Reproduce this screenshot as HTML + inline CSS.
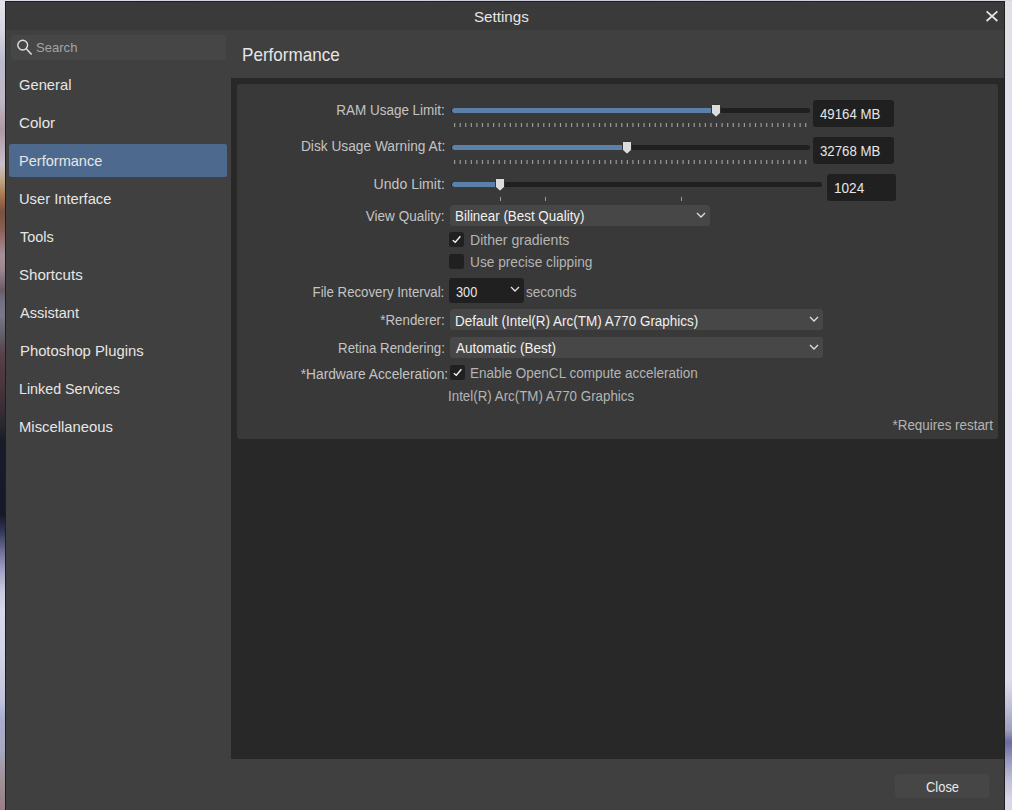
<!DOCTYPE html>
<html><head><meta charset="utf-8"><title>Settings</title>
<style>
html,body{margin:0;padding:0;width:1012px;height:810px;overflow:hidden;background:#404040;}
body{position:relative;font-family:"Liberation Sans", sans-serif;}
body>div,body>svg{position:absolute;}
.t{white-space:nowrap;}
</style></head><body>
<div style="left:0px;top:0px;width:6px;height:810px;background:linear-gradient(to bottom,#e4e4ec 0px,#d6d6e0 30px,#bcbcd0 60px,#c0b8c4 100px,#ad9aa2 130px,#c8c0cc 165px,#c0a888 180px,#a87850 195px,#7a5040 212px,#8a6058 230px,#a89098 255px,#9a8890 270px,#6a5a68 290px,#707080 300px,#787888 315px,#606068 335px,#584048 355px,#403038 400px,#282830 425px,#181c28 440px,#161a28 515px,#303450 530px,#6a6c90 550px,#a0a0c4 570px,#c8c8e0 590px,#d8d8ec 610px,#d4d4e8 650px,#c0c4dc 700px,#a8acd0 720px,#a8a8c0 750px,#a09098 780px,#987e88 810px);border-radius:0px;"></div>
<div style="left:1004px;top:0px;width:8px;height:810px;background:linear-gradient(to bottom,#e0e0e4 0px,#e0e0ec 100px,#dedeea 680px,#c8c8dc 700px,#a0a0c0 730px,#6a6aa0 742px,#9898c0 760px,#c0c0d8 780px,#d8d8e8 800px);border-radius:0px;"></div>
<div style="left:0px;top:0px;width:1012px;height:1px;background:linear-gradient(to right,#dcdce6,#d0d0de 40%,#c8c8d8 60%,#d8d8e0);border-radius:0px;"></div>
<div style="left:5px;top:1px;width:1000px;height:809px;background:#1f1f1f;border-radius:0px;"></div>
<div style="left:6px;top:2px;width:998px;height:28px;background:#3a3a3a;border-radius:0px;"></div>
<div style="left:6px;top:30px;width:998px;height:780px;background:#404040;border-radius:0px;"></div>
<div style="left:11px;top:35px;width:215px;height:25px;background:#464646;border-radius:3px;"></div>
<div style="left:9px;top:144px;width:218px;height:33px;background:#4d6a8e;border-radius:2.5px;"></div>
<div style="left:231px;top:78px;width:773px;height:681px;background:#282828;border-radius:0px;"></div>
<div style="left:237px;top:84px;width:761px;height:355px;background:#393939;border-radius:3px;"></div>
<div style="left:895px;top:774px;width:94px;height:24px;background:#464646;border-radius:3px;"></div>
<div style="left:451px;top:107.9px;width:359px;height:5.599999999999994px;background:#202020;border-radius:3px;"></div>
<div style="left:451.5px;top:107.9px;width:264.5px;height:5.199999999999989px;background:#5b80aa;border-radius:2.6px;"></div>
<div style="left:451px;top:144.9px;width:359px;height:5.599999999999994px;background:#202020;border-radius:3px;"></div>
<div style="left:451.5px;top:144.9px;width:175.5px;height:5.199999999999989px;background:#5b80aa;border-radius:2.6px;"></div>
<div style="left:451px;top:181.9px;width:371px;height:5.599999999999994px;background:#202020;border-radius:3px;"></div>
<div style="left:451.5px;top:181.9px;width:48.5px;height:5.199999999999989px;background:#5b80aa;border-radius:2.6px;"></div>
<svg style="left:711px;top:103.5px;width:10px;height:14px" viewBox="0 0 10 14"><path d="M0.5 1.5 Q0.5 0.5 1.5 0.5 L8.5 0.5 Q9.5 0.5 9.5 1.5 L9.5 9 L5 13.3 L0.5 9 Z" fill="#dcdcdc" stroke="#1a1a1a" stroke-width="0.8"/></svg>
<svg style="left:622px;top:140.5px;width:10px;height:14px" viewBox="0 0 10 14"><path d="M0.5 1.5 Q0.5 0.5 1.5 0.5 L8.5 0.5 Q9.5 0.5 9.5 1.5 L9.5 9 L5 13.3 L0.5 9 Z" fill="#dcdcdc" stroke="#1a1a1a" stroke-width="0.8"/></svg>
<svg style="left:495px;top:178px;width:10px;height:14px" viewBox="0 0 10 14"><path d="M0.5 1.5 Q0.5 0.5 1.5 0.5 L8.5 0.5 Q9.5 0.5 9.5 1.5 L9.5 9 L5 13.3 L0.5 9 Z" fill="#dcdcdc" stroke="#1a1a1a" stroke-width="0.8"/></svg>
<svg style="left:453.9px;top:123px;width:353.1px;height:4px" viewBox="0 0 353.1 4"><rect x="0.00" y="0" width="1.2" height="4" fill="#9a9a9a"/><rect x="5.57" y="0" width="1.2" height="4" fill="#9a9a9a"/><rect x="11.15" y="0" width="1.2" height="4" fill="#9a9a9a"/><rect x="16.72" y="0" width="1.2" height="4" fill="#9a9a9a"/><rect x="22.29" y="0" width="1.2" height="4" fill="#9a9a9a"/><rect x="27.87" y="0" width="1.2" height="4" fill="#9a9a9a"/><rect x="33.44" y="0" width="1.2" height="4" fill="#9a9a9a"/><rect x="39.01" y="0" width="1.2" height="4" fill="#9a9a9a"/><rect x="44.58" y="0" width="1.2" height="4" fill="#9a9a9a"/><rect x="50.16" y="0" width="1.2" height="4" fill="#9a9a9a"/><rect x="55.73" y="0" width="1.2" height="4" fill="#9a9a9a"/><rect x="61.30" y="0" width="1.2" height="4" fill="#9a9a9a"/><rect x="66.88" y="0" width="1.2" height="4" fill="#9a9a9a"/><rect x="72.45" y="0" width="1.2" height="4" fill="#9a9a9a"/><rect x="78.02" y="0" width="1.2" height="4" fill="#9a9a9a"/><rect x="83.60" y="0" width="1.2" height="4" fill="#9a9a9a"/><rect x="89.17" y="0" width="1.2" height="4" fill="#9a9a9a"/><rect x="94.74" y="0" width="1.2" height="4" fill="#9a9a9a"/><rect x="100.31" y="0" width="1.2" height="4" fill="#9a9a9a"/><rect x="105.89" y="0" width="1.2" height="4" fill="#9a9a9a"/><rect x="111.46" y="0" width="1.2" height="4" fill="#9a9a9a"/><rect x="117.03" y="0" width="1.2" height="4" fill="#9a9a9a"/><rect x="122.61" y="0" width="1.2" height="4" fill="#9a9a9a"/><rect x="128.18" y="0" width="1.2" height="4" fill="#9a9a9a"/><rect x="133.75" y="0" width="1.2" height="4" fill="#9a9a9a"/><rect x="139.33" y="0" width="1.2" height="4" fill="#9a9a9a"/><rect x="144.90" y="0" width="1.2" height="4" fill="#9a9a9a"/><rect x="150.47" y="0" width="1.2" height="4" fill="#9a9a9a"/><rect x="156.04" y="0" width="1.2" height="4" fill="#9a9a9a"/><rect x="161.62" y="0" width="1.2" height="4" fill="#9a9a9a"/><rect x="167.19" y="0" width="1.2" height="4" fill="#9a9a9a"/><rect x="172.76" y="0" width="1.2" height="4" fill="#9a9a9a"/><rect x="178.34" y="0" width="1.2" height="4" fill="#9a9a9a"/><rect x="183.91" y="0" width="1.2" height="4" fill="#9a9a9a"/><rect x="189.48" y="0" width="1.2" height="4" fill="#9a9a9a"/><rect x="195.05" y="0" width="1.2" height="4" fill="#9a9a9a"/><rect x="200.63" y="0" width="1.2" height="4" fill="#9a9a9a"/><rect x="206.20" y="0" width="1.2" height="4" fill="#9a9a9a"/><rect x="211.77" y="0" width="1.2" height="4" fill="#9a9a9a"/><rect x="217.35" y="0" width="1.2" height="4" fill="#9a9a9a"/><rect x="222.92" y="0" width="1.2" height="4" fill="#9a9a9a"/><rect x="228.49" y="0" width="1.2" height="4" fill="#9a9a9a"/><rect x="234.07" y="0" width="1.2" height="4" fill="#9a9a9a"/><rect x="239.64" y="0" width="1.2" height="4" fill="#9a9a9a"/><rect x="245.21" y="0" width="1.2" height="4" fill="#9a9a9a"/><rect x="250.78" y="0" width="1.2" height="4" fill="#9a9a9a"/><rect x="256.36" y="0" width="1.2" height="4" fill="#9a9a9a"/><rect x="261.93" y="0" width="1.2" height="4" fill="#9a9a9a"/><rect x="267.50" y="0" width="1.2" height="4" fill="#9a9a9a"/><rect x="273.08" y="0" width="1.2" height="4" fill="#9a9a9a"/><rect x="278.65" y="0" width="1.2" height="4" fill="#9a9a9a"/><rect x="284.22" y="0" width="1.2" height="4" fill="#9a9a9a"/><rect x="289.80" y="0" width="1.2" height="4" fill="#9a9a9a"/><rect x="295.37" y="0" width="1.2" height="4" fill="#9a9a9a"/><rect x="300.94" y="0" width="1.2" height="4" fill="#9a9a9a"/><rect x="306.51" y="0" width="1.2" height="4" fill="#9a9a9a"/><rect x="312.09" y="0" width="1.2" height="4" fill="#9a9a9a"/><rect x="317.66" y="0" width="1.2" height="4" fill="#9a9a9a"/><rect x="323.23" y="0" width="1.2" height="4" fill="#9a9a9a"/><rect x="328.81" y="0" width="1.2" height="4" fill="#9a9a9a"/><rect x="334.38" y="0" width="1.2" height="4" fill="#9a9a9a"/><rect x="339.95" y="0" width="1.2" height="4" fill="#9a9a9a"/><rect x="345.53" y="0" width="1.2" height="4" fill="#9a9a9a"/><rect x="351.10" y="0" width="1.2" height="4" fill="#9a9a9a"/></svg>
<svg style="left:453.9px;top:160px;width:353.1px;height:4px" viewBox="0 0 353.1 4"><rect x="0.00" y="0" width="1.2" height="4" fill="#9a9a9a"/><rect x="5.57" y="0" width="1.2" height="4" fill="#9a9a9a"/><rect x="11.15" y="0" width="1.2" height="4" fill="#9a9a9a"/><rect x="16.72" y="0" width="1.2" height="4" fill="#9a9a9a"/><rect x="22.29" y="0" width="1.2" height="4" fill="#9a9a9a"/><rect x="27.87" y="0" width="1.2" height="4" fill="#9a9a9a"/><rect x="33.44" y="0" width="1.2" height="4" fill="#9a9a9a"/><rect x="39.01" y="0" width="1.2" height="4" fill="#9a9a9a"/><rect x="44.58" y="0" width="1.2" height="4" fill="#9a9a9a"/><rect x="50.16" y="0" width="1.2" height="4" fill="#9a9a9a"/><rect x="55.73" y="0" width="1.2" height="4" fill="#9a9a9a"/><rect x="61.30" y="0" width="1.2" height="4" fill="#9a9a9a"/><rect x="66.88" y="0" width="1.2" height="4" fill="#9a9a9a"/><rect x="72.45" y="0" width="1.2" height="4" fill="#9a9a9a"/><rect x="78.02" y="0" width="1.2" height="4" fill="#9a9a9a"/><rect x="83.60" y="0" width="1.2" height="4" fill="#9a9a9a"/><rect x="89.17" y="0" width="1.2" height="4" fill="#9a9a9a"/><rect x="94.74" y="0" width="1.2" height="4" fill="#9a9a9a"/><rect x="100.31" y="0" width="1.2" height="4" fill="#9a9a9a"/><rect x="105.89" y="0" width="1.2" height="4" fill="#9a9a9a"/><rect x="111.46" y="0" width="1.2" height="4" fill="#9a9a9a"/><rect x="117.03" y="0" width="1.2" height="4" fill="#9a9a9a"/><rect x="122.61" y="0" width="1.2" height="4" fill="#9a9a9a"/><rect x="128.18" y="0" width="1.2" height="4" fill="#9a9a9a"/><rect x="133.75" y="0" width="1.2" height="4" fill="#9a9a9a"/><rect x="139.33" y="0" width="1.2" height="4" fill="#9a9a9a"/><rect x="144.90" y="0" width="1.2" height="4" fill="#9a9a9a"/><rect x="150.47" y="0" width="1.2" height="4" fill="#9a9a9a"/><rect x="156.04" y="0" width="1.2" height="4" fill="#9a9a9a"/><rect x="161.62" y="0" width="1.2" height="4" fill="#9a9a9a"/><rect x="167.19" y="0" width="1.2" height="4" fill="#9a9a9a"/><rect x="172.76" y="0" width="1.2" height="4" fill="#9a9a9a"/><rect x="178.34" y="0" width="1.2" height="4" fill="#9a9a9a"/><rect x="183.91" y="0" width="1.2" height="4" fill="#9a9a9a"/><rect x="189.48" y="0" width="1.2" height="4" fill="#9a9a9a"/><rect x="195.05" y="0" width="1.2" height="4" fill="#9a9a9a"/><rect x="200.63" y="0" width="1.2" height="4" fill="#9a9a9a"/><rect x="206.20" y="0" width="1.2" height="4" fill="#9a9a9a"/><rect x="211.77" y="0" width="1.2" height="4" fill="#9a9a9a"/><rect x="217.35" y="0" width="1.2" height="4" fill="#9a9a9a"/><rect x="222.92" y="0" width="1.2" height="4" fill="#9a9a9a"/><rect x="228.49" y="0" width="1.2" height="4" fill="#9a9a9a"/><rect x="234.07" y="0" width="1.2" height="4" fill="#9a9a9a"/><rect x="239.64" y="0" width="1.2" height="4" fill="#9a9a9a"/><rect x="245.21" y="0" width="1.2" height="4" fill="#9a9a9a"/><rect x="250.78" y="0" width="1.2" height="4" fill="#9a9a9a"/><rect x="256.36" y="0" width="1.2" height="4" fill="#9a9a9a"/><rect x="261.93" y="0" width="1.2" height="4" fill="#9a9a9a"/><rect x="267.50" y="0" width="1.2" height="4" fill="#9a9a9a"/><rect x="273.08" y="0" width="1.2" height="4" fill="#9a9a9a"/><rect x="278.65" y="0" width="1.2" height="4" fill="#9a9a9a"/><rect x="284.22" y="0" width="1.2" height="4" fill="#9a9a9a"/><rect x="289.80" y="0" width="1.2" height="4" fill="#9a9a9a"/><rect x="295.37" y="0" width="1.2" height="4" fill="#9a9a9a"/><rect x="300.94" y="0" width="1.2" height="4" fill="#9a9a9a"/><rect x="306.51" y="0" width="1.2" height="4" fill="#9a9a9a"/><rect x="312.09" y="0" width="1.2" height="4" fill="#9a9a9a"/><rect x="317.66" y="0" width="1.2" height="4" fill="#9a9a9a"/><rect x="323.23" y="0" width="1.2" height="4" fill="#9a9a9a"/><rect x="328.81" y="0" width="1.2" height="4" fill="#9a9a9a"/><rect x="334.38" y="0" width="1.2" height="4" fill="#9a9a9a"/><rect x="339.95" y="0" width="1.2" height="4" fill="#9a9a9a"/><rect x="345.53" y="0" width="1.2" height="4" fill="#9a9a9a"/><rect x="351.10" y="0" width="1.2" height="4" fill="#9a9a9a"/></svg>
<div style="left:499.5px;top:197px;width:1.0px;height:4px;background:#9a9a9a;border-radius:0px;"></div>
<div style="left:545px;top:197px;width:1px;height:4px;background:#9a9a9a;border-radius:0px;"></div>
<div style="left:681px;top:197px;width:1px;height:4px;background:#9a9a9a;border-radius:0px;"></div>
<div style="left:813px;top:100px;width:81px;height:27px;background:#202020;border-radius:3px;"></div>
<div style="left:813px;top:137px;width:81px;height:27px;background:#202020;border-radius:3px;"></div>
<div style="left:827px;top:174px;width:69px;height:27px;background:#202020;border-radius:3px;"></div>
<div style="left:450px;top:205px;width:260px;height:21px;background:#474747;border-radius:3px;"></div>
<svg style="left:696px;top:210.8px;width:10px;height:8px" viewBox="0 0 10 8"><path d="M1 2 L5 6 L9 2" fill="none" stroke="#e0e0e0" stroke-width="1.3"/></svg>
<div style="left:449px;top:278px;width:75px;height:25px;background:#202020;border-radius:3px;"></div>
<svg style="left:509.5px;top:285.3px;width:10px;height:8px" viewBox="0 0 10 8"><path d="M1 2 L5 6 L9 2" fill="none" stroke="#e0e0e0" stroke-width="1.3"/></svg>
<div style="left:450px;top:309px;width:373px;height:21px;background:#474747;border-radius:3px;"></div>
<svg style="left:809px;top:314.8px;width:10px;height:8px" viewBox="0 0 10 8"><path d="M1 2 L5 6 L9 2" fill="none" stroke="#e0e0e0" stroke-width="1.3"/></svg>
<div style="left:450px;top:337px;width:373px;height:21px;background:#474747;border-radius:3px;"></div>
<svg style="left:809px;top:342.8px;width:10px;height:8px" viewBox="0 0 10 8"><path d="M1 2 L5 6 L9 2" fill="none" stroke="#e0e0e0" stroke-width="1.3"/></svg>
<div style="left:449px;top:232px;width:15px;height:15px;background:#202020;border-radius:2.5px;"></div>
<svg style="left:449px;top:232px;width:15px;height:15px" viewBox="0 0 15 15"><path d="M3.8 8.2 L6.3 10.3 L11.4 4.3" fill="none" stroke="#f0f0f0" stroke-width="1.4"/></svg>
<div style="left:449px;top:254px;width:15px;height:15px;background:#202020;border-radius:2.5px;"></div>
<div style="left:450px;top:365px;width:15px;height:15px;background:#202020;border-radius:2.5px;"></div>
<svg style="left:450px;top:365px;width:15px;height:15px" viewBox="0 0 15 15"><path d="M3.8 8.2 L6.3 10.3 L11.4 4.3" fill="none" stroke="#f0f0f0" stroke-width="1.4"/></svg>
<svg style="left:15px;top:38px;width:20px;height:20px" viewBox="0 0 20 20"><circle cx="7.7" cy="7.1" r="4.9" fill="none" stroke="#e0e0e0" stroke-width="1.4"/><path d="M11.3 10.8 L16.6 16.6" stroke="#e0e0e0" stroke-width="1.5"/></svg>
<svg style="left:984px;top:9px;width:16px;height:14px" viewBox="0 0 16 14"><path d="M2.6 2.3 L13.4 12 M13.4 2.3 L2.6 12" stroke="#e8e8e8" stroke-width="1.7"/></svg>
<div class="t" style="left:474.00px;top:9.10px;font-size:15px;line-height:15.0px;color:#e6e6e6;transform:scaleX(1.0114);transform-origin:left center;">Settings</div>
<div class="t" style="left:36.40px;top:41.07px;font-size:13.5px;line-height:13.5px;color:#a4a4a4;transform:scaleX(0.9684);transform-origin:left center;">Search</div>
<div class="t" style="left:18.80px;top:77.00px;font-size:15px;line-height:15.0px;color:#e6e6e6;transform:scaleX(0.9829);transform-origin:left center;">General</div>
<div class="t" style="left:18.80px;top:115.00px;font-size:15px;line-height:15.0px;color:#e6e6e6;transform:scaleX(1.0087);transform-origin:left center;">Color</div>
<div class="t" style="left:18.80px;top:153.00px;font-size:15px;line-height:15.0px;color:#e6e6e6;transform:scaleX(0.9706);transform-origin:left center;">Performance</div>
<div class="t" style="left:18.80px;top:191.00px;font-size:15px;line-height:15.0px;color:#e6e6e6;transform:scaleX(0.9807);transform-origin:left center;">User Interface</div>
<div class="t" style="left:19.80px;top:229.00px;font-size:15px;line-height:15.0px;color:#e6e6e6;transform:scaleX(0.9630);transform-origin:left center;">Tools</div>
<div class="t" style="left:18.80px;top:267.00px;font-size:15px;line-height:15.0px;color:#e6e6e6;transform:scaleX(1.0051);transform-origin:left center;">Shortcuts</div>
<div class="t" style="left:19.80px;top:305.00px;font-size:15px;line-height:15.0px;color:#e6e6e6;transform:scaleX(0.9690);transform-origin:left center;">Assistant</div>
<div class="t" style="left:19.80px;top:343.00px;font-size:15px;line-height:15.0px;color:#e6e6e6;transform:scaleX(0.9880);transform-origin:left center;">Photoshop Plugins</div>
<div class="t" style="left:18.80px;top:381.00px;font-size:15px;line-height:15.0px;color:#e6e6e6;transform:scaleX(0.9524);transform-origin:left center;">Linked Services</div>
<div class="t" style="left:18.80px;top:419.00px;font-size:15px;line-height:15.0px;color:#e6e6e6;transform:scaleX(0.9872);transform-origin:left center;">Miscellaneous</div>
<div class="t" style="left:242.00px;top:44.92px;font-size:19px;line-height:19.0px;color:#e6e6e6;transform:scaleX(0.8998);transform-origin:left center;">Performance</div>
<div class="t" style="right:567.00px;top:103.05px;font-size:14px;line-height:14.0px;color:#c4c4c4;transform:scaleX(0.9622);transform-origin:right center;">RAM Usage Limit:</div>
<div class="t" style="right:567.00px;top:139.15px;font-size:14px;line-height:14.0px;color:#c4c4c4;transform:scaleX(0.9799);transform-origin:right center;">Disk Usage Warning At:</div>
<div class="t" style="right:567.00px;top:176.55px;font-size:14px;line-height:14.0px;color:#c4c4c4;transform:scaleX(1.0058);transform-origin:right center;">Undo Limit:</div>
<div class="t" style="right:568.00px;top:208.95px;font-size:14px;line-height:14.0px;color:#c4c4c4;transform:scaleX(0.9652);transform-origin:right center;">View Quality:</div>
<div class="t" style="right:567.60px;top:284.95px;font-size:14px;line-height:14.0px;color:#c4c4c4;transform:scaleX(0.9457);transform-origin:right center;">File Recovery Interval:</div>
<div class="t" style="right:567.00px;top:313.35px;font-size:14px;line-height:14.0px;color:#c4c4c4;transform:scaleX(0.9516);transform-origin:right center;">*Renderer:</div>
<div class="t" style="right:567.00px;top:341.05px;font-size:14px;line-height:14.0px;color:#c4c4c4;transform:scaleX(0.9459);transform-origin:right center;">Retina Rendering:</div>
<div class="t" style="right:564.20px;top:366.75px;font-size:14px;line-height:14.0px;color:#c4c4c4;transform:scaleX(0.9819);transform-origin:right center;">*Hardware Acceleration:</div>
<div class="t" style="left:820.00px;top:107.05px;font-size:14px;line-height:14.0px;color:#e6e6e6;transform:scaleX(0.9446);transform-origin:left center;">49164 MB</div>
<div class="t" style="left:820.00px;top:143.75px;font-size:14px;line-height:14.0px;color:#e6e6e6;transform:scaleX(0.9446);transform-origin:left center;">32768 MB</div>
<div class="t" style="left:833.80px;top:181.05px;font-size:14px;line-height:14.0px;color:#e6e6e6;transform:scaleX(0.9705);transform-origin:left center;">1024</div>
<div class="t" style="left:455.20px;top:208.75px;font-size:14px;line-height:14.0px;color:#f0f0f0;transform:scaleX(0.9567);transform-origin:left center;">Bilinear (Best Quality)</div>
<div class="t" style="left:469.70px;top:233.15px;font-size:14px;line-height:14.0px;color:#b4b4b4;transform:scaleX(1.0053);transform-origin:left center;">Dither gradients</div>
<div class="t" style="left:469.70px;top:254.65px;font-size:14px;line-height:14.0px;color:#b4b4b4;transform:scaleX(0.9774);transform-origin:left center;">Use precise clipping</div>
<div class="t" style="left:456.40px;top:285.35px;font-size:14px;line-height:14.0px;color:#e6e6e6;transform:scaleX(0.9094);transform-origin:left center;">300</div>
<div class="t" style="left:525.80px;top:285.35px;font-size:14px;line-height:14.0px;color:#b4b4b4;transform:scaleX(0.9689);transform-origin:left center;">seconds</div>
<div class="t" style="left:455.20px;top:313.65px;font-size:14px;line-height:14.0px;color:#f0f0f0;transform:scaleX(0.9622);transform-origin:left center;">Default (Intel(R) Arc(TM) A770 Graphics)</div>
<div class="t" style="left:456.20px;top:341.35px;font-size:14px;line-height:14.0px;color:#f0f0f0;transform:scaleX(0.9669);transform-origin:left center;">Automatic (Best)</div>
<div class="t" style="left:470.00px;top:366.25px;font-size:14px;line-height:14.0px;color:#b4b4b4;transform:scaleX(0.9650);transform-origin:left center;">Enable OpenCL compute acceleration</div>
<div class="t" style="left:448.40px;top:388.95px;font-size:14px;line-height:14.0px;color:#b4b4b4;transform:scaleX(0.9533);transform-origin:left center;">Intel(R) Arc(TM) A770 Graphics</div>
<div class="t" style="right:18.80px;top:417.65px;font-size:14px;line-height:14.0px;color:#b4b4b4;transform:scaleX(0.9572);transform-origin:right center;">*Requires restart</div>
<div class="t" style="left:925.80px;top:780.45px;font-size:14px;line-height:14.0px;color:#e6e6e6;transform:scaleX(0.9235);transform-origin:left center;">Close</div>
</body></html>
